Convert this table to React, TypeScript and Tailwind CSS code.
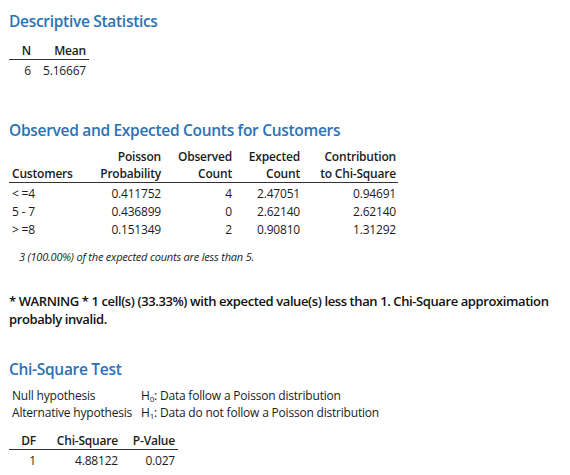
import React from "react";

const font = { fontFamily: '"Open Sans", "Noto Sans", sans-serif' };

function Title({ children }: { children: React.ReactNode }) {
  return (
    <div className="text-[15.5px] font-semibold leading-[20px] text-[#2a72b5] tracking-[-0.3px]">
      {children}
    </div>
  );
}

export default function App() {
  return (
    <div
      className="w-[570px] h-[475px] bg-white text-[#1b1b1b] pl-[9px] pt-[11px] overflow-hidden"
      style={font}
    >
      <Title>Descriptive Statistics</Title>

      <table className="mt-[11px] text-[12px] leading-[17px] border-collapse tracking-[-0.2px]">
        <thead>
          <tr className="border-b border-[#333]">
            <th className="w-[22px] text-right font-semibold pr-0">N</th>
            <th className="w-[58px] text-right font-semibold pr-[3px]">Mean</th>
          </tr>
        </thead>
        <tbody>
          <tr>
            <td className="text-right pt-[2px]">6</td>
            <td className="text-right pr-[3px] pt-[2px]">5.16667</td>
          </tr>
        </tbody>
      </table>

      <div className="mt-[41px]">
        <Title>Observed and Expected Counts for Customers</Title>
      </div>

      <table className="mt-[8px] text-[12px] leading-[17px] border-collapse tracking-[-0.2px]">
        <thead>
          <tr>
            <th className="w-[80px]"></th>
            <th className="w-[72px] text-right font-semibold">Poisson</th>
            <th className="w-[71px] text-right font-semibold">Observed</th>
            <th className="w-[68px] text-right font-semibold">Expected</th>
            <th className="w-[98px] text-right font-semibold pr-[2px]">Contribution</th>
          </tr>
          <tr className="border-b border-[#333]">
            <th className="text-left font-semibold pl-[3px]">Customers</th>
            <th className="text-right font-semibold">Probability</th>
            <th className="text-right font-semibold">Count</th>
            <th className="text-right font-semibold">Count</th>
            <th className="text-right font-semibold pr-[2px]">to Chi-Square</th>
          </tr>
        </thead>
        <tbody>
          {[
            ["< =4", "0.411752", "4", "2.47051", "0.94691"],
            ["5 - 7", "0.436899", "0", "2.62140", "2.62140"],
            ["> =8", "0.151349", "2", "0.90810", "1.31292"],
          ].map((r, i) => (
            <tr key={i} className={i === 0 ? "h-[19px] align-bottom" : "h-[18px] align-bottom"}>
              <td className="text-left pl-[3px]">{r[0]}</td>
              <td className="text-right">{r[1]}</td>
              <td className="text-right">{r[2]}</td>
              <td className="text-right">{r[3]}</td>
              <td className="text-right pr-[2px]">{r[4]}</td>
            </tr>
          ))}
        </tbody>
      </table>

      <div className="mt-[11px] pl-[10px] text-[11px] italic leading-[15px] tracking-[-0.2px]">
        3 (100.00%) of the expected counts are less than 5.
      </div>

      <div className="mt-[28px] text-[13px] font-semibold leading-[18px] tracking-[-0.4px] text-[#111]">
        * WARNING * 1 cell(s) (33.33%) with expected value(s) less than 1. Chi-Square approximation
        <br />
        probably invalid.
      </div>

      <div className="mt-[31px]">
        <Title>Chi-Square Test</Title>
      </div>

      <div className="mt-[8px] pl-[3px] text-[12px] leading-[17px] tracking-[-0.2px]">
        <div className="flex">
          <span className="w-[129px]">Null hypothesis</span>
          <span>
            H<sub className="text-[8px]">0</sub>: Data follow a Poisson distribution
          </span>
        </div>
        <div className="flex">
          <span className="w-[129px]">Alternative hypothesis</span>
          <span>
            H<sub className="text-[8px]">1</sub>: Data do not follow a Poisson distribution
          </span>
        </div>
      </div>

      <table className="mt-[11px] text-[12px] leading-[17px] border-collapse tracking-[-0.2px]">
        <thead>
          <tr className="border-b border-[#333]">
            <th className="w-[27px] text-right font-semibold">DF</th>
            <th className="w-[82px] text-right font-semibold">Chi-Square</th>
            <th className="w-[60px] text-right font-semibold pr-[3px]">P-Value</th>
          </tr>
        </thead>
        <tbody>
          <tr>
            <td className="text-right pt-[2px]">1</td>
            <td className="text-right pt-[2px]">4.88122</td>
            <td className="text-right pr-[3px] pt-[2px]">0.027</td>
          </tr>
        </tbody>
      </table>
    </div>
  );
}
